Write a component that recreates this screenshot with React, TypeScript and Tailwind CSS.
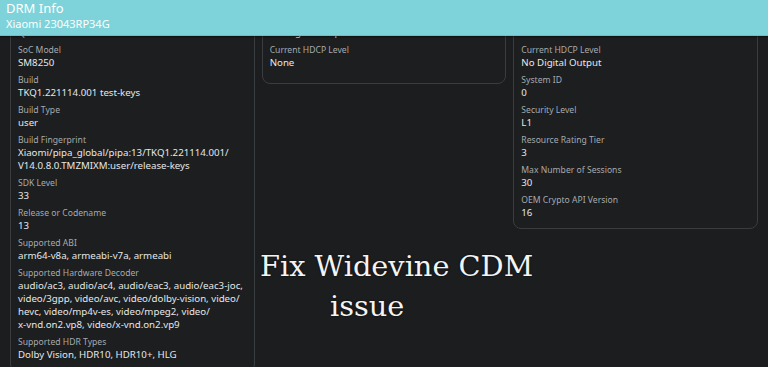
import React from "react";

type Item = { label: string; lines: string[] };

const card1: Item[] = [
  { label: "SoC Manufacturer", lines: ["QTI"] },
  { label: "SoC Model", lines: ["SM8250"] },
  { label: "Build", lines: ["TKQ1.221114.001 test-keys"] },
  { label: "Build Type", lines: ["user"] },
  {
    label: "Build Fingerprint",
    lines: ["Xiaomi/pipa_global/pipa:13/TKQ1.221114.001/", "V14.0.8.0.TMZMIXM:user/release-keys"],
  },
  { label: "SDK Level", lines: ["33"] },
  { label: "Release or Codename", lines: ["13"] },
  { label: "Supported ABI", lines: ["arm64-v8a, armeabi-v7a, armeabi"] },
  {
    label: "Supported Hardware Decoder",
    lines: [
      "audio/ac3, audio/ac4, audio/eac3, audio/eac3-joc,",
      "video/3gpp, video/avc, video/dolby-vision, video/",
      "hevc, video/mp4v-es, video/mpeg2, video/",
      "x-vnd.on2.vp8, video/x-vnd.on2.vp9",
    ],
  },
  { label: "Supported HDR Types", lines: ["Dolby Vision, HDR10, HDR10+, HLG"] },
];

const card2: Item[] = [
  { label: "Max HDCP Level", lines: ["No Digital Output"] },
  { label: "Current HDCP Level", lines: ["None"] },
];

const card3: Item[] = [
  { label: "Max HDCP Level", lines: ["HDCP V2.3"] },
  { label: "Current HDCP Level", lines: ["No Digital Output"] },
  { label: "System ID", lines: ["0"] },
  { label: "Security Level", lines: ["L1"] },
  { label: "Resource Rating Tier", lines: ["3"] },
  { label: "Max Number of Sessions", lines: ["30"] },
  { label: "OEM Crypto API Version", lines: ["16"] },
];

function Card({ items, pb }: { items: Item[]; pb: string }) {
  return (
    <div className={`rounded-[8px] border border-[#3a3d40] bg-[#1c1e20] px-[7px] pt-[5px] ${pb} flex flex-col gap-[6px]`}>
      {items.map((it) => (
        <div key={it.label} className="flex flex-col">
          <div className="text-[8.6px] leading-[11px] text-[#a7aaad] whitespace-nowrap">{it.label}</div>
          {it.lines.map((l, i) => (
            <div key={i} className="text-[9.7px] leading-[13px] text-[#e6e7e8] whitespace-nowrap">
              {l}
            </div>
          ))}
        </div>
      ))}
    </div>
  );
}

export default function App() {
  return (
    <div
      className="relative w-[768px] h-[367px] overflow-hidden bg-[#1b1d1f] flex flex-col"
      style={{ fontFamily: '"Noto Sans", "Open Sans", sans-serif' }}
    >
      <header className="relative z-10 h-[36px] shrink-0 bg-[#7dd3d9] px-[6px] shadow-[0_1px_2px_rgba(0,0,0,0.5)] border-b border-[#6bbfc5]">
        <div className="text-[13px] leading-[16px] text-white">DRM Info</div>
        <div className="mt-[1px] text-[11px] leading-[14px] text-white">Xiaomi 23043RP34G</div>
      </header>
      <main className="relative flex-1 overflow-hidden">
        <div className="-mt-[27px] grid grid-cols-3 items-start gap-[7px] px-[10px]">
          <Card items={card1} pb="pb-[10px]" />
          <Card items={card2} pb="pb-[14px]" />
          <Card items={card3} pb="pb-[9px]" />
        </div>
      </main>
      <div
        className="absolute left-[260px] top-[246px] z-20 text-[28.8px] leading-[40px] text-[#f4f4f4] [text-shadow:0_0_2px_rgba(0,0,0,0.8)]"
        style={{ fontFamily: '"DejaVu Serif", serif' }}
      >
        <div className="whitespace-nowrap">Fix Widevine CDM</div>
        <div className="pl-[70px] whitespace-nowrap">issue</div>
      </div>
    </div>
  );
}
